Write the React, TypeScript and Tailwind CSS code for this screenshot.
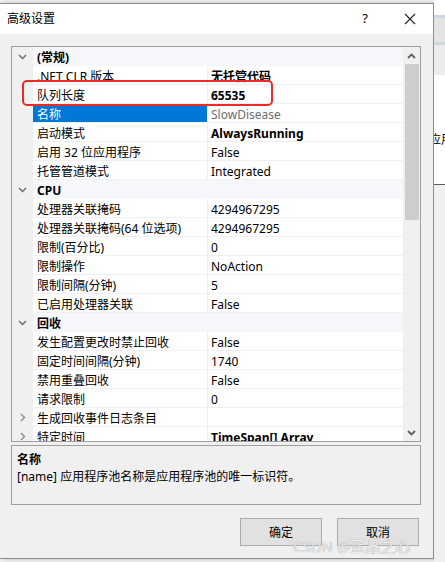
import React from "react";

type Row =
  | { kind: "cat"; label: string }
  | { kind: "prop"; label: string; value?: string; bold?: boolean; selected?: boolean; expand?: boolean; dim?: boolean };

const rows: Row[] = [
  { kind: "cat", label: "(常规)" },
  { kind: "prop", label: ".NET CLR 版本", value: "无托管代码", bold: true },
  { kind: "prop", label: "队列长度", value: "65535", bold: true },
  { kind: "prop", label: "名称", value: "SlowDisease", selected: true, dim: true },
  { kind: "prop", label: "启动模式", value: "AlwaysRunning", bold: true },
  { kind: "prop", label: "启用 32 位应用程序", value: "False" },
  { kind: "prop", label: "托管管道模式", value: "Integrated" },
  { kind: "cat", label: "CPU" },
  { kind: "prop", label: "处理器关联掩码", value: "4294967295" },
  { kind: "prop", label: "处理器关联掩码(64 位选项)", value: "4294967295" },
  { kind: "prop", label: "限制(百分比)", value: "0" },
  { kind: "prop", label: "限制操作", value: "NoAction" },
  { kind: "prop", label: "限制间隔(分钟)", value: "5" },
  { kind: "prop", label: "已启用处理器关联", value: "False" },
  { kind: "cat", label: "回收" },
  { kind: "prop", label: "发生配置更改时禁止回收", value: "False" },
  { kind: "prop", label: "固定时间间隔(分钟)", value: "1740" },
  { kind: "prop", label: "禁用重叠回收", value: "False" },
  { kind: "prop", label: "请求限制", value: "0" },
  { kind: "prop", label: "生成回收事件日志条目", expand: true },
  { kind: "prop", label: "特定时间", value: "TimeSpan[] Array", bold: true, expand: true },
];

const ChevronDown = () => (
  <svg width="9" height="6" viewBox="0 0 9 6">
    <path d="M1 1l3.5 3.5L8 1" fill="none" stroke="#6a6a6a" strokeWidth="1.4" />
  </svg>
);

const ChevronRight = () => (
  <svg width="6" height="9" viewBox="0 0 6 9">
    <path d="M1 1l3.5 3.5L1 8" fill="none" stroke="#8a8a8a" strokeWidth="1.4" />
  </svg>
);

const ScrollArrow = ({ up }: { up?: boolean }) => (
  <svg width="9" height="6" viewBox="0 0 9 6">
    <path d={up ? "M1 5l3.5-3.5L8 5" : "M1 1l3.5 3.5L8 1"} fill="none" stroke="#606060" strokeWidth="1.8" />
  </svg>
);

const GridRow = ({ row }: { row: Row }) => {
  if (row.kind === "cat") {
    return (
      <div className="flex h-[19px] shrink-0">
        <div className="flex w-[21px] items-center justify-center bg-[#f0f0f0]">
          <ChevronDown />
        </div>
        <div className="flex flex-1 items-center bg-[#f5f7fb] pt-[3px] pl-[4px] font-bold">{row.label}</div>
      </div>
    );
  }
  return (
    <div className="flex h-[19px] shrink-0">
      <div className="flex w-[21px] items-center justify-center bg-[#f0f0f0]">
        {row.expand && <ChevronRight />}
      </div>
      <div
        className={`flex w-[175px] items-center border-r border-b border-[#f0f0f0] pt-[3px] pl-[4px] whitespace-nowrap ${
          row.selected ? "bg-[#0078d7] text-white" : "bg-white"
        }`}
      >
        {row.label}
      </div>
      <div
        className={`flex flex-1 items-center border-b border-[#f0f0f0] bg-white pt-[3px] pl-[3px] whitespace-nowrap ${
          row.bold ? "font-bold" : ""
        } ${row.dim ? "text-[#6d6d6d]" : ""}`}
      >
        {row.value}
      </div>
    </div>
  );
};

export default function App() {
  return (
    <div className="relative flex h-[562px] w-[445px] overflow-hidden bg-[#f3f3f3] font-['Noto_Sans','Noto_Sans_CJK_SC',sans-serif] text-[12px] text-black">
      {/* dialog window */}
      <div className="mt-[3px] flex h-[556px] w-[434px] shrink-0 flex-col border-t border-r border-b border-[#8c8c8c] bg-[#f0f0f0] shadow-[2px_0_4px_rgba(0,0,0,0.25)]">
        <div className="flex h-[30px] shrink-0 items-center bg-white pl-[7px]">
          <span className="flex-1 text-[12px]">高级设置</span>
          <span className="w-[20px] text-center text-[13px]">?</span>
          <span className="ml-[25px] mr-[13px] flex w-[20px] justify-center">
            <svg width="12" height="12" viewBox="0 0 12 12">
              <path d="M1 1l10 10M11 1L1 11" stroke="#222" strokeWidth="1.1" />
            </svg>
          </span>
        </div>

        <div className="flex flex-1 flex-col pt-[12px]">
          {/* property grid */}
          <div className="ml-[11px] flex h-[396px] w-[410px] shrink-0 overflow-hidden border border-[#a0a0a0] bg-white">
            <div className="flex w-[391px] flex-col overflow-hidden">
              {rows.map((r, i) => (
                <GridRow key={i} row={r} />
              ))}
            </div>
            <div className="flex w-[17px] flex-col bg-[#f0f0f0]">
              <div className="flex h-[17px] items-center justify-center">
                <ScrollArrow up />
              </div>
              <div className="mx-auto h-[156px] w-[14px] bg-[#cdcdcd]" />
              <div className="flex-1" />
              <div className="flex h-[17px] items-center justify-center">
                <ScrollArrow />
              </div>
            </div>
          </div>

          {/* description */}
          <div className="mt-[3px] ml-[11px] h-[60px] w-[410px] shrink-0 border border-[#a0a0a0] pt-[5px] pl-[5px]">
            <div className="h-[17px] leading-[17px] font-bold">名称</div>
            <div className="h-[18px] leading-[18px]">[name] 应用程序池名称是应用程序池的唯一标识符。</div>
          </div>

          {/* buttons */}
          <div className="mt-[13px] ml-[240px] flex gap-[15px]">
            <button className="flex h-[28px] w-[82px] items-center justify-center border border-[#adadad] bg-[#e1e1e1] pt-[1px]">
              确定
            </button>
            <button className="flex h-[28px] w-[82px] items-center justify-center border border-[#adadad] bg-[#e1e1e1] pt-[1px]">
              取消
            </button>
          </div>
        </div>
      </div>

      {/* window behind */}
      <div className="flex flex-1 flex-col overflow-hidden">
        <div className="h-[15px] bg-white" />
        <div className="h-[3px] bg-[#cbd7e6]" />
        <div className="h-[24px] bg-[#e4e4e4]" />
        <div className="h-[3px] bg-[#cbd7e6]" />
        <div className="h-[30px] bg-[#ececec]" />
        <div className="flex h-[109px] flex-col bg-white pt-[57px]">
          <span className="-ml-[5px] h-[16px] leading-[16px] whitespace-nowrap text-[12px]">应用</span>
        </div>
        <div className="h-[1px] bg-[#5a5a5a]" />
        <div className="flex-1 bg-[#f0f0f0]" />
      </div>

      {/* annotation */}
      <div className="absolute top-[80px] left-[22px] h-[26px] w-[251px] rounded-[5px] border-2 border-[#ee2a24]" />

      {/* watermark */}
      <div className="absolute top-[535px] left-[293px] text-[15px] whitespace-nowrap text-[#ececec] [text-shadow:0_0_1px_#8a8a8a]">
        CSDN @蓝晶之心
      </div>
    </div>
  );
}
